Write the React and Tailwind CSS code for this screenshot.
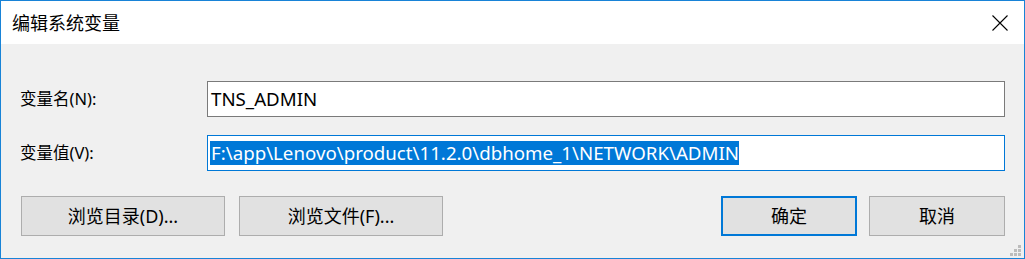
import React from 'react';

const FONT = { fontFamily: '"Noto Sans", "Noto Sans CJK SC", sans-serif' };

const CloseIcon = () => (
  <svg width="16" height="16" viewBox="0 0 16 16" className="block">
    <path d="M0.5 0.5 L15.5 15.5 M15.5 0.5 L0.5 15.5" stroke="#000" strokeWidth="1.1" fill="none" />
  </svg>
);

const ResizeGrip = () => (
  <svg width="11" height="11" viewBox="0 0 11 11" className="block">
    <rect x="8" y="0" width="3" height="3" fill="#bcbcbc" />
    <rect x="4" y="4" width="3" height="3" fill="#bcbcbc" />
    <rect x="8" y="4" width="3" height="3" fill="#bcbcbc" />
    <rect x="0" y="8" width="3" height="3" fill="#bcbcbc" />
    <rect x="4" y="8" width="3" height="3" fill="#bcbcbc" />
    <rect x="8" y="8" width="3" height="3" fill="#bcbcbc" />
  </svg>
);

const Button = ({ children, primary, wide }) => (
  <button
    className={
      primary
        ? 'h-[40px] w-[136px] bg-[#e1e1e1] border-2 border-[#0078d7] text-[18px] text-black flex items-center justify-center'
        : wide
        ? 'h-[40px] w-[204px] bg-[#e1e1e1] border border-[#adadad] text-[18px] text-black flex items-center justify-center'
        : 'h-[40px] w-[136px] bg-[#e1e1e1] border border-[#adadad] text-[18px] text-black flex items-center justify-center'
    }
  >
    {children}
  </button>
);

export default function App() {
  return (
    <div style={FONT} className="relative w-[1025px] h-[259px] border border-[#1883d7] bg-[#f0f0f0] flex flex-col">
      {/* title bar */}
      <div className="h-[43px] bg-white flex items-center justify-between pl-[11px] pr-[16px]">
        <span className="text-[18px] text-black leading-none">编辑系统变量</span>
        <CloseIcon />
      </div>

      {/* fields */}
      <div className="flex flex-col gap-[18px] pt-[37px] pl-[19px] pr-[19px]">
        <div className="flex items-center">
          <label className="w-[187px] text-[16.5px] text-black">变量名(N):</label>
          <div className="flex-1 h-[36px] bg-white border border-[#7a7a7a] flex items-center pl-[3px]">
            <span className="text-[18.7px] text-black leading-[24px]">TNS_ADMIN</span>
          </div>
        </div>
        <div className="flex items-center">
          <label className="w-[187px] text-[16.5px] text-black">变量值(V):</label>
          <div className="flex-1 h-[36px] bg-white border border-[#0078d7] flex items-center pl-[2px]">
            <span className="text-[18.7px] text-white bg-[#0078d7] leading-[24px] pl-[1px]">
              F:\app\Lenovo\product\11.2.0\dbhome_1\NETWORK\ADMIN
            </span>
          </div>
        </div>
      </div>

      {/* buttons */}
      <div className="flex items-center pt-[25px] pl-[20px] pr-[19px]">
        <div className="flex gap-[14px]">
          <Button wide>浏览目录(D)...</Button>
          <Button wide>浏览文件(F)...</Button>
        </div>
        <div className="flex gap-[12px] ml-auto">
          <Button primary>确定</Button>
          <Button>取消</Button>
        </div>
      </div>

      <div className="absolute right-[3px] bottom-[2px]">
        <ResizeGrip />
      </div>
    </div>
  );
}
